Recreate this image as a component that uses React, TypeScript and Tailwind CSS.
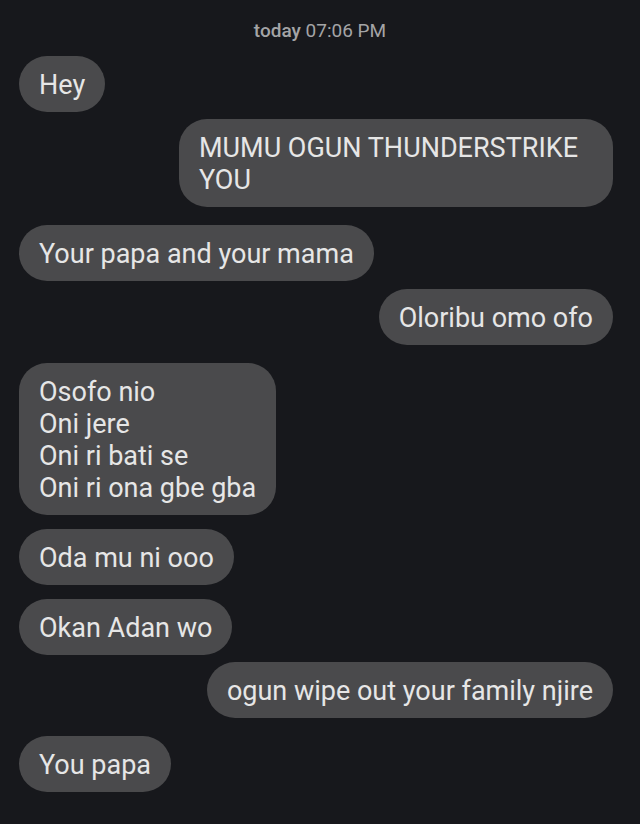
const messages: { text: string[]; me: boolean; mt: string }[] = [
  { text: ["Hey"], me: false, mt: "mt-0" },
  { text: ["MUMU OGUN THUNDERSTRIKE YOU"], me: true, mt: "mt-[7px]" },
  { text: ["Your papa and your mama"], me: false, mt: "mt-[18px]" },
  { text: ["Oloribu omo ofo"], me: true, mt: "mt-[8px]" },
  { text: ["Osofo nio", "Oni jere", "Oni ri bati se", "Oni ri ona gbe gba"], me: false, mt: "mt-[18px]" },
  { text: ["Oda mu ni ooo"], me: false, mt: "mt-[14px]" },
  { text: ["Okan Adan wo"], me: false, mt: "mt-[14px]" },
  { text: ["ogun wipe out your family njire"], me: true, mt: "mt-[7px]" },
  { text: ["You papa"], me: false, mt: "mt-[18px]" },
];

function Bubble({ text, me, mt }: { text: string[]; me: boolean; mt: string }) {
  return (
    <div className={`flex ${me ? "justify-end" : "justify-start"} ${mt}`}>
      <div className="max-w-[434px] rounded-[28px] bg-[#4a4a4c] px-5 pt-[13px] pb-[11px] text-[27px] leading-[32px] text-[#e6e6e6]">
        {text.map((line, i) => (
          <div key={i}>{line}</div>
        ))}
      </div>
    </div>
  );
}

export default function App() {
  return (
    <div
      className="min-h-screen bg-[#17181c] pt-[19px] pb-8"
      style={{ fontFamily: "Roboto, 'Liberation Sans', sans-serif" }}
    >
      {/* Timestamp */}
      <div className="mb-[13px] text-center text-[19px] leading-6 text-[#a4a4a6]">
        <span className="font-medium">today</span> 07:06 PM
      </div>

      {/* Conversation */}
      <div className="flex flex-col pl-[19px] pr-[27px]">
        {messages.map((m, i) => (
          <Bubble key={i} {...m} />
        ))}
      </div>
    </div>
  );
}
